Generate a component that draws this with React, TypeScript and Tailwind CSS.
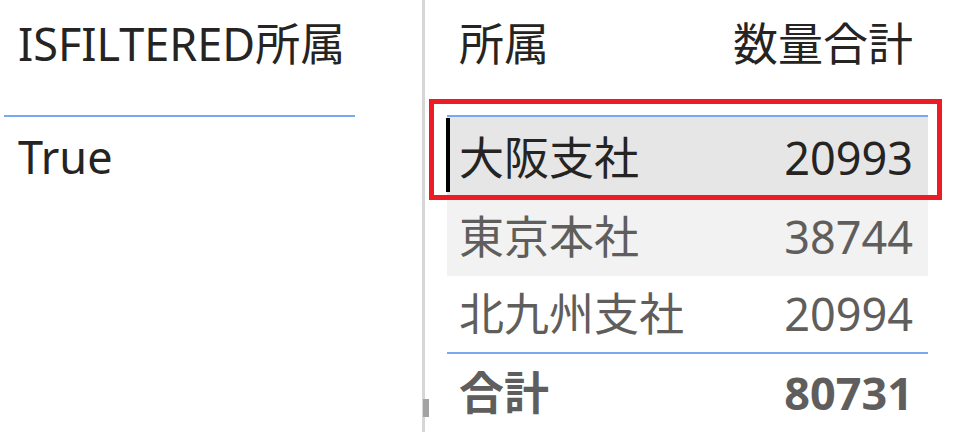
export default function App() {
  return (
    <div className="relative flex w-[958px] h-[432px] bg-white overflow-hidden font-['Noto_Sans','Noto_Sans_CJK_JP',sans-serif] text-[45px] leading-[60px]">
      <div className="w-[422px] pl-[4px]">
        <div className="w-[351px]">
          <div className="h-[115px] pl-[14px] pt-[14px] text-[#252423] whitespace-nowrap">ISFILTERED所属</div>
          <div className="h-[2px] bg-[#7ba7f3]" />
          <div className="h-[79px] flex items-center pl-[14px] text-[#252423]">True</div>
        </div>
      </div>
      <div className="relative w-[3px] h-full bg-[#d6d6d6]">
        <div className="absolute left-[1px] top-[399px] w-[6px] h-[18px] bg-[#a3a3a3]" />
      </div>
      <div className="pl-[22px]">
        <div className="w-[481px]">
          <div className="h-[115px] flex justify-between pl-[12px] pr-[15px] pt-[14px] text-[#252423]">
            <span>所属</span>
            <span>数量合計</span>
          </div>
          <div className="h-[2px] bg-[#7ba7f3]" />
          <div className="relative h-[81px] bg-[#e6e6e6] flex items-center justify-between pl-[12px] pr-[15px] text-[#252423]">
            <div className="absolute left-[-1px] top-[1px] w-[4px] h-[74px] bg-black" />
            <span>大阪支社</span>
            <span>20993</span>
          </div>
          <div className="h-[78px] bg-[#f2f2f2] flex items-center justify-between pl-[12px] pr-[15px] text-[#605e5c]">
            <span>東京本社</span>
            <span>38744</span>
          </div>
          <div className="h-[76px] flex items-center justify-between pl-[12px] pr-[15px] text-[#605e5c]">
            <span>北九州支社</span>
            <span>20994</span>
          </div>
          <div className="h-[2px] bg-[#7ba7f3]" />
          <div className="h-[78px] flex items-center justify-between pl-[12px] pr-[15px] text-[#605e5c] font-bold">
            <span>合計</span>
            <span>80731</span>
          </div>
        </div>
      </div>
      <div className="absolute left-[429px] top-[99px] w-[513px] h-[101px] border-[5px] border-[#ed1c24]" />
    </div>
  );
}
